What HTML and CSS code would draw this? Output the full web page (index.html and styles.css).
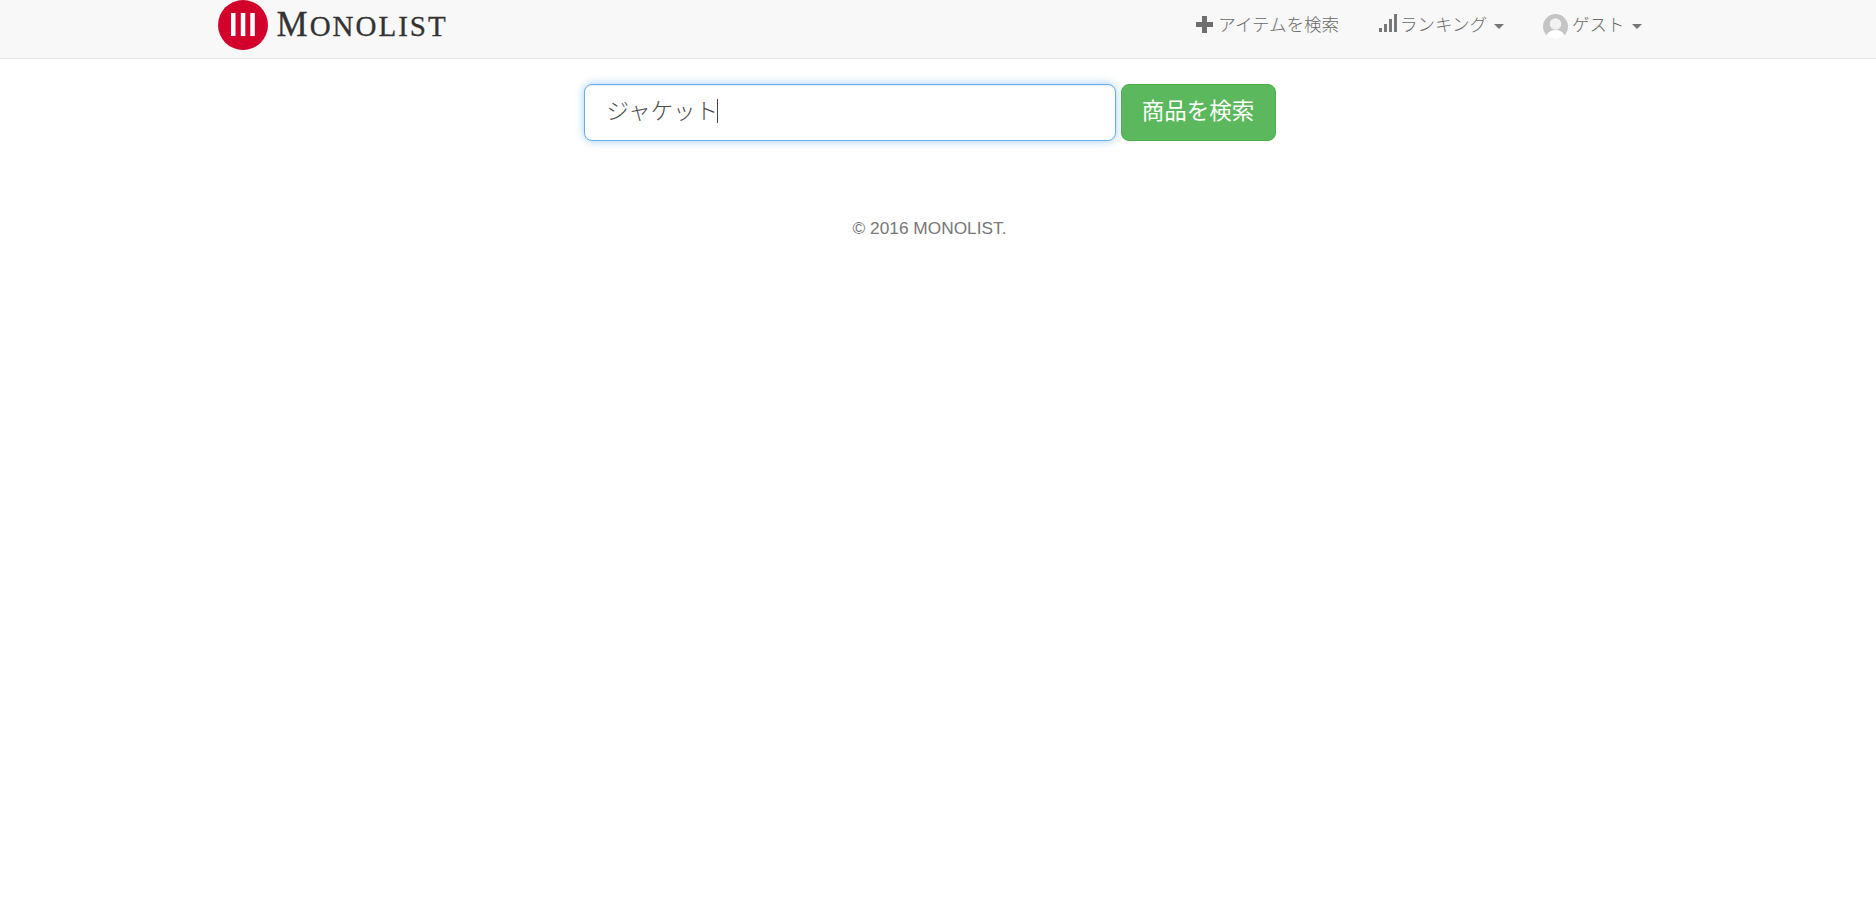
FILE: index.html
```html
<!DOCTYPE html>
<html lang="ja">
<head>
    <meta charset="UTF-8">
    <title>Monolist</title>
    <link rel="stylesheet" href="styles.css">
</head>
<body>
    <header class="navbar">
        <div class="container navbar-inner">
            <a class="brand" href="#">
                <svg class="brand-mark" width="50" height="50" viewBox="0 0 50 50">
                    <circle cx="25" cy="25" r="25" fill="#d4002c"/>
                    <rect x="13" y="13" width="4.500" height="23" fill="#fff"/>
                    <rect x="22.800" y="13" width="4.500" height="23" fill="#fff"/>
                    <rect x="32.300" y="13" width="4.500" height="23" fill="#fff"/>
                </svg>
                <span class="brand-name"><span class="brand-cap">M</span>ONOLIST</span>
            </a>
            <ul class="nav">
                <li><a href="#">
                    <svg class="icon-plus" width="17" height="17" viewBox="0 0 17 17"><path d="M6 0h5v6h6v5h-6v6H6v-6H0V6h6z" fill="#6e6e6e"/></svg>
                    アイテムを検索</a></li>
                <li><a href="#">
                    <svg class="icon-signal" width="18" height="18" viewBox="0 0 18 18"><path d="M0 14h3v4H0zM5 10h3v8H5zM10 5h3v13h-3zM15 0h3v18h-3z" fill="#777"/></svg>
                    ランキング <span class="caret"></span></a></li>
                <li><a href="#">
                    <svg class="avatar" width="25" height="25" viewBox="0 0 25 25">
                        <circle cx="12.500" cy="12.500" r="12.500" fill="#c4c4c4"/>
                        <circle cx="12.500" cy="10" r="5.800" fill="#f2f2f2"/>
                        <path d="M3.500 21.200c2-3.700 5-5.200 9-5.200s7 1.500 9 5.200a12.500 12.500 0 0 1-18 0z" fill="#fff"/>
                    </svg>
                    ゲスト <span class="caret"></span></a></li>
            </ul>
        </div>
    </header>

    <main class="container">
        <form class="search-form">
            <div class="search-field">
                <input class="search-input" type="text" value="ジャケット">
                <span class="text-cursor"></span>
            </div>
            <button class="btn-search" type="button">商品を検索</button>
        </form>
    </main>

    <footer class="footer">© 2016 MONOLIST.</footer>
</body>
</html>
```

FILE: styles.css
```css
* {
    box-sizing: border-box;
}

/* room for the scrollbar the page was laid out with */
body {
    margin: 0;
    padding-right: 17px;
    font-family: "Liberation Sans", "Noto Sans CJK JP", sans-serif;
    font-size: 17.5px;
    font-weight: 300;
    color: #777;
    background-color: #fff;
}

a {
    color: inherit;
    text-decoration: none;
}

.container {
    width: 1462px;
    margin: 0 auto;
    padding-left: 19px;
}

.navbar {
    height: 59px;
    margin-right: -17px;
    padding-right: 17px;
    background-color: #f8f8f8;
    border-bottom: 1px solid #e7e7e7;
}

.navbar-inner {
    display: flex;
    justify-content: space-between;
}

.brand {
    display: flex;
    align-items: center;
    height: 50px;
    gap: 9px;
}

.brand-name {
    font-family: "Liberation Serif", serif;
    font-size: 29px;
    font-weight: 400;
    color: #333;
    letter-spacing: 2px;
    -webkit-text-stroke: 0.3px #333;
}

.brand-cap {
    font-size: 35px;
}

.nav {
    display: flex;
    list-style: none;
    margin: 0;
    padding: 0;
}

.nav a {
    display: flex;
    align-items: center;
    height: 48px;
    padding: 0 19px 2px;
    gap: 5px;
    color: #6a6a6a;
}

.icon-plus {
    margin-top: 2px;
}

.icon-signal {
    margin: 0 -2px 0 2px;
}

.avatar {
    margin: 7px -1px 0 1px;
}

.caret {
    width: 0;
    height: 0;
    margin-top: 6px;
    margin-left: 2px;
    border-top: 5px solid #777;
    border-left: 5px solid transparent;
    border-right: 5px solid transparent;
}

.search-form {
    display: flex;
    justify-content: center;
    gap: 5px;
    margin-top: 25px;
    margin-left: -19px;
}

.search-field {
    position: relative;
}

.search-input {
    display: block;
    width: 532px;
    height: 57px;
    padding: 0 22px 8px;
    font-family: inherit;
    font-size: 22.5px;
    font-weight: 300;
    color: #4a4a4a;
    border: 1px solid #66afe9;
    border-radius: 8px;
    outline: none;
    box-shadow: inset 0 1px 1px rgba(0, 0, 0, .075), 0 0 10px rgba(102, 175, 233, .6);
}

.text-cursor {
    position: absolute;
    left: 133px;
    top: 15px;
    width: 1px;
    height: 24px;
    background-color: #444;
}

.btn-search {
    width: 155px;
    height: 57px;
    padding: 0 0 7px;
    font-family: inherit;
    font-size: 22.5px;
    font-weight: 400;
    color: #fff;
    background-color: #5cb85c;
    border: 1px solid #4cae4c;
    border-radius: 8px;
}

.footer {
    margin-top: 77px;
    text-align: center;
    font-size: 17.3px;
}
```
